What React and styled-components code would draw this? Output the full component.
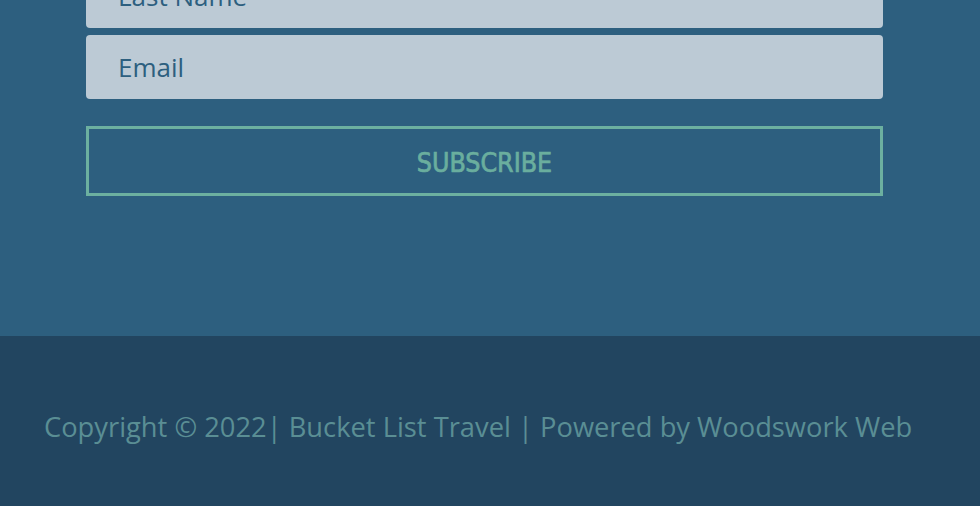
import styled, { createGlobalStyle } from "styled-components";

const Global = createGlobalStyle`
  html, body {
    margin: 0;
    padding: 0;
    height: 100%;
    background: #224560;
    overflow: hidden;
  }
  * { box-sizing: border-box; }
`;

const Page = styled.div`
  display: flex;
  flex-direction: column;
  height: 506px;
  font-family: "Open Sans", "Liberation Sans", sans-serif;
`;

const Signup = styled.section`
  background: #2d5f7f;
  height: 336px;
  padding-left: 86px;
  overflow: hidden;
`;

const Form = styled.form`
  width: 797px;
  margin-top: -36px;
  display: flex;
  flex-direction: column;
  gap: 7px;
`;

const Field = styled.input`
  height: 64px;
  width: 100%;
  border: none;
  border-radius: 4px;
  background: #bccad5;
  padding: 0 0 0 32px;
  font-family: "Open Sans", "Liberation Sans", sans-serif;
  font-size: 26px;
  color: #2d5f7f;
  outline: none;

  &::placeholder {
    color: #2d5f7f;
    opacity: 1;
  }
`;

const Button = styled.button`
  margin-top: 20px;
  height: 70px;
  width: 100%;
  padding: 3px 0 0;
  background: transparent;
  border: 3px solid #6cb0a0;
  color: #6aae9e;
  font-family: "DejaVu Sans Condensed", "Liberation Sans Narrow", sans-serif;
  font-weight: 400;
  font-size: 26.5px;
  -webkit-text-stroke: 0.7px #6aae9e;
  cursor: pointer;
`;

const Footer = styled.footer`
  flex: 1;
  background: #224560;
  display: flex;
  align-items: center;
  padding: 10px 0 0 44px;
`;

const Copy = styled.p`
  margin: 0;
  font-size: 27.3px;
  color: #5a8e94;
  white-space: nowrap;
`;

export default function App() {
  return (
    <Page>
      <Global />
      <Signup>
        <Form onSubmit={(e) => e.preventDefault()}>
          <Field type="text" placeholder="Last Name" />
          <Field type="email" placeholder="Email" />
          <Button type="submit">SUBSCRIBE</Button>
        </Form>
      </Signup>
      <Footer>
        <Copy>Copyright © 2022| Bucket List Travel | Powered by Woodswork Web</Copy>
      </Footer>
    </Page>
  );
}
